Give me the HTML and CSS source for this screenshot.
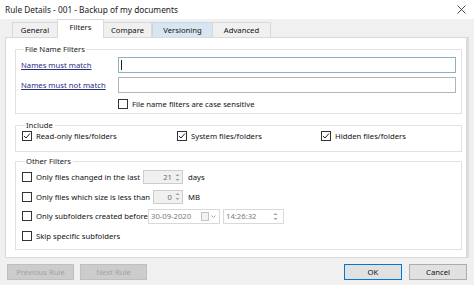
FILE: index.html
```
<!DOCTYPE html>
<html lang="en">
  <head>
    <meta charset="UTF-8" />
    <title>Rule Details - 001 - Backup of my documents</title>
    <link rel="stylesheet" href="styles.css">
  </head>
  <body>
    <div class="window">
      <div class="titlebar">
        <span class="title">Rule Details - 001 - Backup of my documents</span>
        <svg class="close" width="9" height="9" viewBox="0 0 9 9">
          <path d="M0.5 0.5 L8.5 8.5 M8.5 0.5 L0.5 8.5" stroke="#333" stroke-width="0.9" fill="none" />
        </svg>
      </div>

      <div class="tabs">
        <span class="tab general">General</span>
        <span class="tab filters active">Filters</span>
        <span class="tab compare">Compare</span>
        <span class="tab versioning hover">Versioning</span>
        <span class="tab advanced">Advanced</span>
      </div>

      <div class="panel">
        <fieldset class="group names">
          <legend>File Name Filters</legend>
          <a class="link" href="#">Names must match</a>
          <span class="textbox focused"><span class="caret"></span></span>
          <a class="link" href="#">Names must not match</a>
          <span class="textbox"></span>
          <span></span>
          <label class="check"><span class="box"></span>File name filters are case sensitive</label>
        </fieldset>

        <fieldset class="group include">
          <legend>Include</legend>
          <label class="check readonly"><span class="box checked"></span>Read-only files/folders</label>
          <label class="check system"><span class="box checked"></span>System files/folders</label>
          <label class="check"><span class="box checked"></span>Hidden files/folders</label>
        </fieldset>

        <fieldset class="group other">
          <legend>Other Filters</legend>
          <div class="row">
            <label class="check changed"><span class="box"></span>Only files changed in the last</label>
            <span class="spin wide"><span class="val">21</span><span class="arrows"></span></span>
            <span class="unit">days</span>
          </div>
          <div class="row">
            <label class="check size"><span class="box"></span>Only files which size is less than</label>
            <span class="spin"><span class="val">0</span><span class="arrows"></span></span>
            <span class="unit">MB</span>
          </div>
          <div class="row">
            <label class="check created"><span class="box"></span>Only subfolders created before</label>
            <span class="date"><span class="day">30-09-2020</span><span class="cal"></span><span class="drop"></span></span>
            <span class="time">14:26:32<span class="arrows"></span></span>
          </div>
          <div class="row">
            <label class="check"><span class="box"></span>Skip specific subfolders</label>
          </div>
        </fieldset>
      </div>

      <div class="footer">
        <button class="btn" disabled>Previous Rule</button>
        <button class="btn" disabled>Next Rule</button>
        <span class="spacer"></span>
        <button class="btn default">OK</button>
        <button class="btn cancel">Cancel</button>
      </div>
    </div>
  </body>
</html>
```

FILE: styles.css
```
* {
  box-sizing: border-box;
}

html,
body {
  margin: 0;
  padding: 0;
}

body {
  width: 474px;
  height: 285px;
  overflow: hidden;
  background: #f0f0f0;
  font-family: "Noto Sans", "Open Sans", Arial, sans-serif;
  font-size: 7.7px;
  color: #111;
}

.titlebar {
  height: 19px;
  display: flex;
  align-items: center;
  justify-content: space-between;
  padding: 0 8px 0 5px;
  background: #fff;
}

.title {
  font-size: 8.3px;
  color: #1a1a1a;
}

.tabs {
  height: 18px;
  display: flex;
  align-items: flex-end;
  padding-left: 12px;
}

.tab {
  height: 15px;
  line-height: 14px;
  text-align: center;
  border: 1px solid #d9d9d9;
  border-bottom: none;
  margin-right: -1px;
  background: #f0f0f0;
  color: #111;
}

.general { width: 46px; }
.filters { width: 47px; }
.compare { width: 49px; }
.versioning { width: 61px; margin-left: 1px; }
.advanced { width: 59px; }

.tab.active {
  height: 19px;
  line-height: 15px;
  background: #fff;
  position: relative;
  z-index: 1;
  margin-bottom: -1px;
}

.tab.hover {
  background: #d8e6f2;
  border-color: #c3d6ea;
}

.panel {
  height: 221px;
  margin: 0 5px;
  background: #fff;
  border: 1px solid #d9d9d9;
  border-right: 3px solid #dcdcdc;
  padding: 6px 4px 0 9px;
  display: flex;
  flex-direction: column;
}

.group {
  margin: 0;
  border: 1px solid #e1e1e1;
  padding: 0 6px;
  min-width: 0;
}

.group legend {
  line-height: 11px;
  padding: 0 2px 0 1px;
  margin-left: 3px;
  color: #1a1a1a;
}

.names {
  height: 70px;
  display: grid;
  grid-template-columns: 97px 1fr;
  grid-template-rows: 15px 15px 13px;
  row-gap: 5px;
  align-items: center;
  padding: 2px 5px 0 5px;
}

.link {
  color: #2d2d7f;
  text-decoration: underline;
}

.textbox {
  height: 16px;
  border: 1px solid #b4b4b4;
  background: #fff;
  position: relative;
}

.textbox.focused {
  border-color: #8fb0c4;
}

.caret {
  position: absolute;
  left: 2px;
  top: 2px;
  width: 1px;
  height: 10px;
  background: #222;
}

.check {
  display: flex;
  align-items: center;
  gap: 4px;
  white-space: nowrap;
}

.box {
  width: 10px;
  height: 10px;
  border: 1px solid #333;
  background: #fff;
  flex: none;
}

.box.checked {
  background: #fff url("data:image/svg+xml,%3Csvg xmlns='http://www.w3.org/2000/svg' width='8' height='8'%3E%3Cpath d='M1 4 L3 6 L7 1.5' stroke='%23222' stroke-width='1' fill='none'/%3E%3C/svg%3E") no-repeat center;
}

.include {
  height: 32px;
  margin-top: 6px;
  display: flex;
  align-items: center;
  padding: 0 6px 1px 6px;
}

.include .readonly { width: 155px; }
.include .system { width: 144px; }

.other {
  height: 94px;
  margin-top: 4px;
  display: flex;
  flex-direction: column;
  gap: 5.5px;
  padding: 3px 6px 0 6px;
}

.row {
  height: 14px;
  display: flex;
  align-items: center;
}

.changed { width: 121px; }
.size { width: 131px; }
.created { width: 126px; }

.spin {
  height: 14px;
  width: 30px;
  border: 1px solid #cdcdcd;
  background: #f0f0f0;
  display: flex;
  align-items: center;
  justify-content: flex-end;
  color: #6d6d6d;
}

.spin.wide {
  width: 40px;
}

.spin .val {
  padding-right: 1px;
}

.arrows {
  width: 9px;
  height: 11px;
  background: url("data:image/svg+xml,%3Csvg xmlns='http://www.w3.org/2000/svg' width='9' height='11'%3E%3Cpath d='M2.5 4 L4.5 2 L6.5 4 Z M2.5 7 L4.5 9 L6.5 7 Z' fill='%23a0a0a0'/%3E%3C/svg%3E") no-repeat center;
}

.unit {
  margin-left: 5px;
}

.date {
  height: 15px;
  width: 72px;
  border: 1px solid #d9d9d9;
  display: flex;
  align-items: center;
  padding-left: 2px;
  color: #7a7a7a;
  white-space: nowrap;
}

.cal {
  width: 8px;
  height: 9px;
  margin-left: 10px;
  border: 1px solid #c4c4c4;
  background: #f2f2f2;
}

.drop {
  width: 7px;
  height: 7px;
  margin-left: 1px;
  background: url("data:image/svg+xml,%3Csvg xmlns='http://www.w3.org/2000/svg' width='7' height='7'%3E%3Cpath d='M1.5 2.5 L3.5 4.5 L5.5 2.5' stroke='%23aaa' fill='none'/%3E%3C/svg%3E") no-repeat center;
}

.time {
  height: 15px;
  width: 61px;
  margin-left: 3px;
  border: 1px solid #d9d9d9;
  display: flex;
  align-items: center;
  justify-content: space-between;
  padding: 0 3px 0 2px;
  color: #7a7a7a;
}

.footer {
  height: 27px;
  display: flex;
  align-items: center;
  gap: 6px;
  padding: 0 7px;
}

.spacer {
  flex: 1;
}

.btn {
  width: 67px;
  height: 16px;
  padding: 0;
  font: inherit;
  border: 1px solid #adadad;
  background: #e1e1e1;
  color: #111;
}

.btn:disabled {
  background: #cccccc;
  border-color: #bfbfbf;
  color: #a3a3a3;
}

.btn.default {
  width: 58px;
  border-color: #0078d7;
}

.btn.cancel {
  width: 58px;
  margin-left: 1px;
}
```
